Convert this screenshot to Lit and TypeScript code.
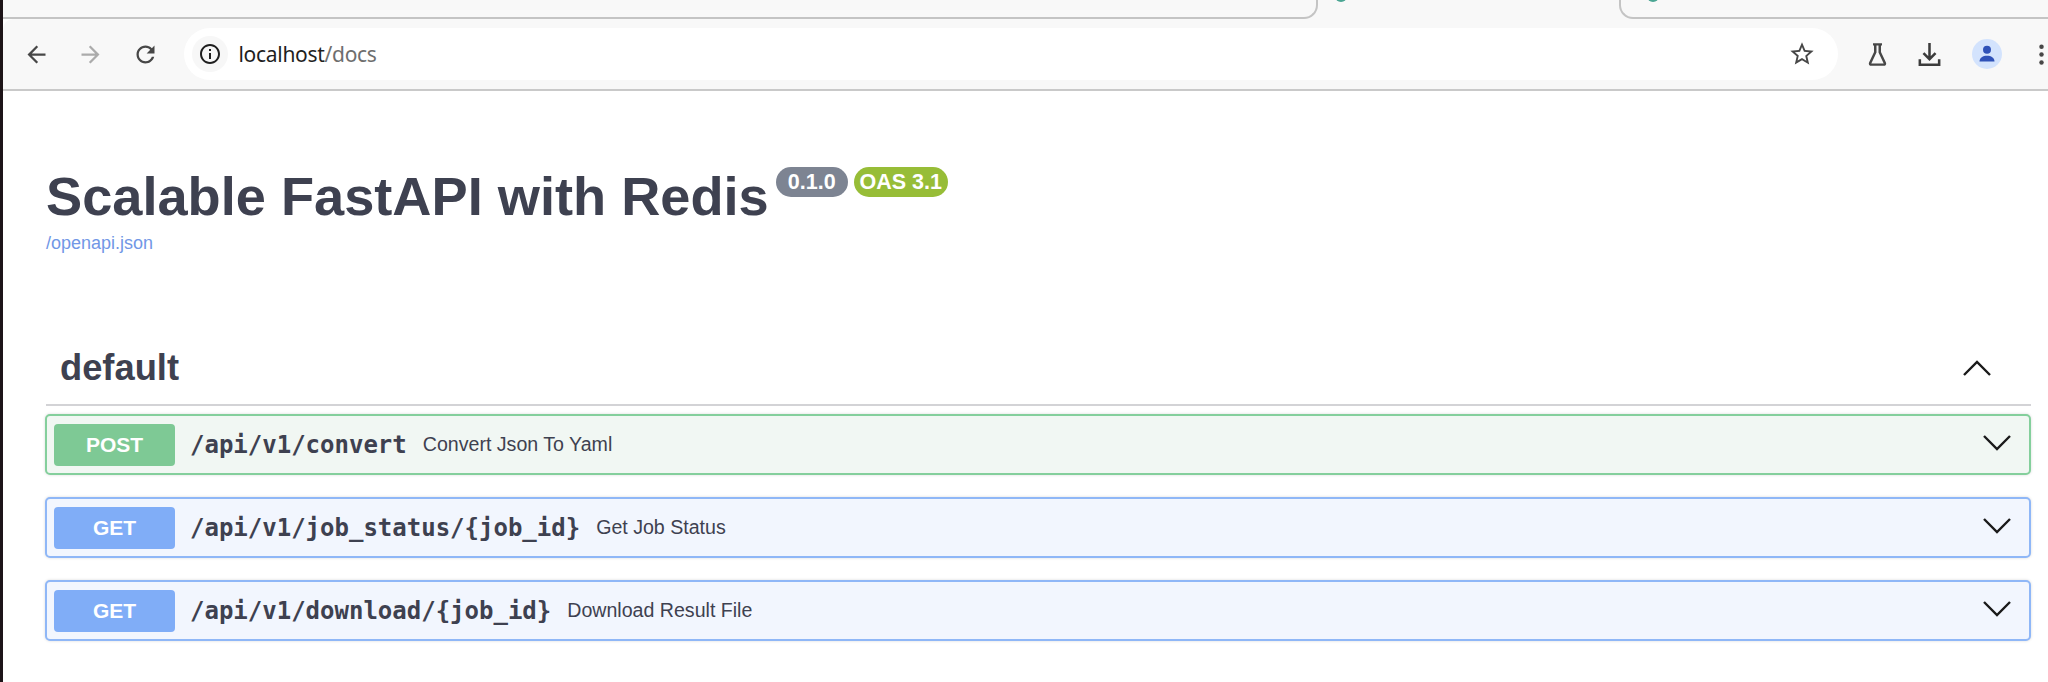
import { LitElement, html, css, svg } from 'lit';
import { customElement } from 'lit/decorators.js';

interface Operation {
  method: 'POST' | 'GET';
  path: string;
  summary: string;
}

const OPERATIONS: Operation[] = [
  { method: 'POST', path: '/api/v1/convert', summary: 'Convert Json To Yaml' },
  { method: 'GET', path: '/api/v1/job_status/{job_id}', summary: 'Get Job Status' },
  { method: 'GET', path: '/api/v1/download/{job_id}', summary: 'Download Result File' },
];

const icon = (size: number, body: unknown, fill = '#474747') => html`
  <svg width=${size} height=${size} viewBox="0 0 24 24" fill=${fill}>${body}</svg>
`;

const chevron = (up: boolean) => html`
  <svg width="28" height="28" viewBox="0 0 28 28" fill="none" stroke="#1a1a1a" stroke-width="2.4">
    <path d=${up ? 'M1 21 14 8l13 13' : 'M1 5l13 13L27 5'}></path>
  </svg>
`;

@customElement('app-root')
export class AppRoot extends LitElement {
  static styles = css`
    :host {
      display: flex;
      width: 2048px;
      height: 682px;
      overflow: hidden;
      background: #fff;
      font-family: 'Liberation Sans', Arial, sans-serif;
      color: #3e4150;
    }
    .edge {
      flex: 0 0 3px;
      background: #1d1418;
    }
    .window {
      flex: 1;
      min-width: 0;
      display: flex;
      flex-direction: column;
    }

    .tabs {
      display: flex;
      height: 19px;
      background: #f8f8f8;
    }
    .tab {
      box-sizing: border-box;
      height: 19px;
      overflow: hidden;
      border-bottom: 2px solid #c4c4c4;
    }
    .tab.first {
      flex: 0 0 1315px;
      border-right: 2px solid #c4c4c4;
      border-bottom-right-radius: 14px;
    }
    .tab.active {
      flex: 0 0 301px;
      border-bottom: 0;
      padding-left: 17px;
    }
    .tab.last {
      flex: 1;
      border-left: 2px solid #c4c4c4;
      border-bottom-left-radius: 14px;
      padding-left: 26px;
    }
    .favicon {
      display: block;
      width: 12px;
      height: 12px;
      margin-top: -10px;
      border-radius: 50%;
      background: #4aa593;
    }

    .toolbar {
      display: flex;
      align-items: center;
      box-sizing: border-box;
      height: 72px;
      padding-left: 6px;
      background: #f8f8f8;
      border-bottom: 2px solid #c9c9c9;
      border-top-left-radius: 10px;
    }
    .btn {
      flex: 0 0 54.5px;
      display: flex;
      justify-content: center;
      align-items: center;
    }
    .omnibox {
      flex: 0 0 1654px;
      box-sizing: border-box;
      height: 52px;
      margin-left: 11px;
      padding: 0 22px 0 8px;
      display: flex;
      align-items: center;
      background: #fff;
      border-radius: 26px;
    }
    .chip {
      flex: 0 0 36px;
      height: 36px;
      display: flex;
      align-items: center;
      justify-content: center;
      border-radius: 50%;
      background: #f7f7f7;
    }
    .url {
      margin-left: 11px;
      flex: 1;
      font-family: 'Noto Sans', sans-serif;
      font-size: 21px;
      letter-spacing: -0.3px;
      color: #1f1f1f;
    }
    .url span {
      color: #6e6e6e;
    }
    .actions {
      display: flex;
      align-items: center;
      margin-left: 14px;
    }
    .action {
      flex: 0 0 52px;
      display: flex;
      justify-content: center;
    }
    .action.profile {
      flex-basis: 62px;
    }
    .action.menu {
      flex-basis: 48px;
    }
    .avatar {
      width: 30px;
      height: 30px;
      border-radius: 50%;
      background: #d3e3fd;
      display: flex;
      align-items: center;
      justify-content: center;
    }

    .page {
      flex: 1;
      padding: 69px 17px 0 43px;
    }
    .title {
      display: flex;
      align-items: flex-start;
      gap: 6px;
    }
    h1 {
      margin: 0 1px 0 0;
      font-size: 54.2px;
      line-height: 72px;
      font-weight: 700;
      white-space: nowrap;
    }
    .badge {
      box-sizing: border-box;
      margin-top: 7px;
      height: 30px;
      display: flex;
      align-items: center;
      justify-content: center;
      border-radius: 15px;
      color: #fff;
      font-size: 21.5px;
      font-weight: 700;
    }
    .badge.version {
      flex: 0 0 72px;
      background: #7d8492;
    }
    .badge.oas {
      flex: 0 0 94px;
      background: #97bd37;
    }
    .spec-link {
      display: block;
      font-size: 18px;
      line-height: 22px;
      color: #7197e6;
    }

    .tag {
      display: flex;
      align-items: center;
      justify-content: space-between;
      box-sizing: border-box;
      height: 76px;
      margin-top: 76px;
      padding: 2px 40px 0 14px;
      border-bottom: 2px solid #d3d3d6;
    }
    .tag h3 {
      margin: 0;
      font-size: 36.3px;
      font-weight: 700;
    }

    .ops {
      display: flex;
      flex-direction: column;
      gap: 22px;
      margin: 8px 0 0 -1px;
    }
    .op {
      box-sizing: border-box;
      height: 61px;
      display: flex;
      align-items: center;
      padding: 0 18px 0 7px;
      border: 2px solid;
      border-radius: 5px;
      box-shadow: 0 0 3px rgba(0, 0, 0, 0.15);
    }
    .op.post {
      background: #f1f7f3;
      border-color: #84cf9c;
    }
    .op.get {
      background: #f2f6fe;
      border-color: #8fb7f7;
    }
    .method {
      flex: 0 0 121px;
      height: 42px;
      display: flex;
      align-items: center;
      justify-content: center;
      border-radius: 4px;
      color: #fff;
      font-size: 21px;
      font-weight: 700;
    }
    .post .method {
      background: #7ec995;
    }
    .get .method {
      background: #80adf7;
    }
    .path {
      margin-left: 15px;
      font-family: 'DejaVu Sans Mono', monospace;
      font-size: 24px;
      font-weight: 700;
      white-space: nowrap;
    }
    .summary {
      flex: 1;
      margin-left: 16px;
      font-size: 19.6px;
      white-space: nowrap;
    }
  `;

  private renderOperation(op: Operation) {
    return html`
      <div class="op ${op.method.toLowerCase()}">
        <span class="method">${op.method}</span>
        <span class="path">${op.path}</span>
        <span class="summary">${op.summary}</span>
        ${chevron(false)}
      </div>
    `;
  }

  render() {
    return html`
      <div class="edge"></div>
      <div class="window">
        <div class="tabs">
          <div class="tab first"></div>
          <div class="tab active"><span class="favicon"></span></div>
          <div class="tab last"><span class="favicon"></span></div>
        </div>
        <div class="toolbar">
          <div class="btn">
            ${icon(27, svg`<path d="M20 11H7.83l5.59-5.59L12 4l-8 8 8 8 1.41-1.41L7.83 13H20v-2z"/>`)}
          </div>
          <div class="btn">
            ${icon(27, svg`<path d="M4 11h12.17l-5.59-5.59L12 4l8 8-8 8-1.41-1.41L16.17 13H4v-2z"/>`, '#ababab')}
          </div>
          <div class="btn">
            ${icon(27, svg`<path d="M17.65 6.35C16.2 4.9 14.21 4 12 4c-4.42 0-7.99 3.58-7.99 8s3.57 8 7.99 8c3.73 0 6.84-2.55 7.73-6h-2.08c-.82 2.33-3.04 4-5.65 4-3.31 0-6-2.69-6-6s2.69-6 6-6c1.66 0 3.14.69 4.22 1.78L13 11h7V4l-2.35 2.35z"/>`)}
          </div>
          <div class="omnibox">
            <div class="chip">
              ${icon(24, svg`<path d="M11 7h2v2h-2zm0 4h2v6h-2zm1-9C6.48 2 2 6.48 2 12s4.48 10 10 10 10-4.48 10-10S17.52 2 12 2zm0 18c-4.41 0-8-3.59-8-8s3.59-8 8-8 8 3.59 8 8-3.59 8-8 8z"/>`, '#1f1f1f')}
            </div>
            <div class="url">localhost<span>/docs</span></div>
            ${icon(28, svg`<path d="M22 9.24l-7.19-.62L12 2 9.19 8.63 2 9.24l5.46 4.73L5.82 21 12 17.27 18.18 21l-1.63-7.03L22 9.24zM12 15.4l-3.76 2.27 1-4.28-3.32-2.88 4.38-.38L12 6.1l1.71 4.04 4.38.38-3.32 2.88 1 4.28L12 15.4z"/>`)}
          </div>
          <div class="actions">
            <div class="action">
              ${icon(27, svg`<path d="M8 3h8M10 3.5v6.5L5.5 19.5c-.4.9.1 1.5 1 1.5h11c.9 0 1.4-.6 1-1.5L14 10V3.5" fill="none" stroke="#474747" stroke-width="2.2"/>`)}
            </div>
            <div class="action">
              ${icon(29, svg`<path d="M12 2.5v13M7 10.8l5 5 5-5M4 16v4.5h16V16" fill="none" stroke="#3c3c3c" stroke-width="2.1"/>`)}
            </div>
            <div class="action profile">
              <div class="avatar">
                ${icon(24, svg`<circle cx="12" cy="7.8" r="4"/><path d="M4.5 19.5c0-4 3.5-5.8 7.5-5.8s7.5 1.8 7.5 5.8z"/>`, '#2f52b8')}
              </div>
            </div>
            <div class="action menu">
              ${icon(27, svg`<circle cx="12" cy="5" r="2"/><circle cx="12" cy="12" r="2"/><circle cx="12" cy="19" r="2"/>`)}
            </div>
          </div>
        </div>
        <main class="page">
          <div class="title">
            <h1>Scalable FastAPI with Redis</h1>
            <span class="badge version">0.1.0</span>
            <span class="badge oas">OAS 3.1</span>
          </div>
          <a class="spec-link">/openapi.json</a>
          <div class="tag">
            <h3>default</h3>
            ${chevron(true)}
          </div>
          <div class="ops">${OPERATIONS.map((op) => this.renderOperation(op))}</div>
        </main>
      </div>
    `;
  }
}

declare global {
  interface HTMLElementTagNameMap {
    'app-root': AppRoot;
  }
}
